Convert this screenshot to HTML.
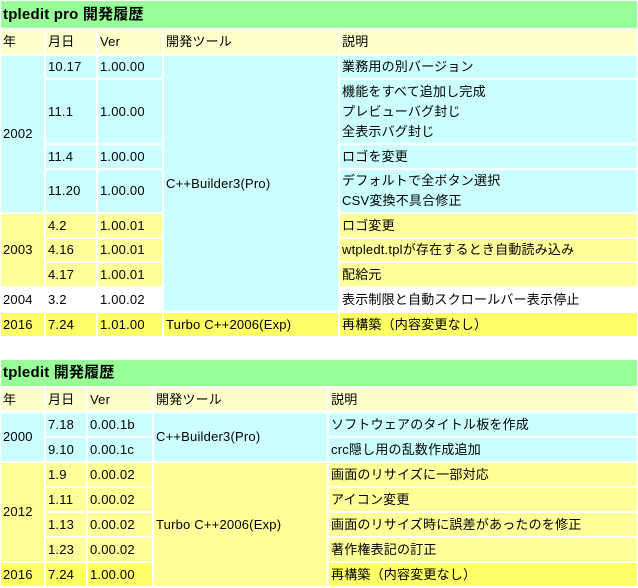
<!DOCTYPE html>
<html><head><meta charset="utf-8"><style>
body{margin:0;background:#fff;font-family:"Liberation Sans","Noto Sans CJK JP",sans-serif;font-size:13px;color:#000;}
table{border-collapse:separate;border-spacing:2px;width:640px;margin:-1px -1px 0 -1px;table-layout:fixed;position:absolute;left:0}
td{padding:0 2px;vertical-align:middle;line-height:20px;white-space:nowrap;overflow:hidden;letter-spacing:0.2px}
.t{background:#99ff99;font-weight:bold;font-size:15px;}
.h td{background:#ffffcc}
.c{background:#ccffff}
.y{background:#ffff99}
.z{background:#ffff66}
.w{background:#fff}
</style></head><body>
<table style="top:0">
<colgroup><col style="width:43px"><col style="width:50px"><col style="width:64px"><col style="width:174px"><col></colgroup>
<tr style="height:27px"><td class="t" colspan="5">tpledit pro 開発履歴</td></tr>
<tr class="h" style="height:24px"><td>年</td><td>月日</td><td>Ver</td><td>開発ツール</td><td>説明</td></tr>
<tr style="height:22px"><td class="c" rowspan="4">2002</td><td class="c">10.17</td><td class="c">1.00.00</td><td class="c" rowspan="8">C++Builder3(Pro)</td><td class="c">業務用の別バージョン</td></tr>
<tr style="height:63px"><td class="c">11.1</td><td class="c">1.00.00</td><td class="c">機能をすべて追加し完成<br>プレビューバグ封じ<br>全表示バグ封じ</td></tr>
<tr style="height:23px"><td class="c">11.4</td><td class="c">1.00.00</td><td class="c">ロゴを変更</td></tr>
<tr style="height:42px"><td class="c">11.20</td><td class="c">1.00.00</td><td class="c">デフォルトで全ボタン選択<br>CSV変換不具合修正</td></tr>
<tr style="height:23px"><td class="y" rowspan="3">2003</td><td class="y">4.2</td><td class="y">1.00.01</td><td class="y">ロゴ変更</td></tr>
<tr style="height:22px"><td class="y">4.16</td><td class="y">1.00.01</td><td class="y">wtpledt.tplが存在するとき自動読み込み</td></tr>
<tr style="height:23px"><td class="y">4.17</td><td class="y">1.00.01</td><td class="y">配給元</td></tr>
<tr style="height:23px"><td class="w">2004</td><td class="w">3.2</td><td class="w">1.00.02</td><td class="w">表示制限と自動スクロールバー表示停止</td></tr>
<tr style="height:23px"><td class="z">2016</td><td class="z">7.24</td><td class="z">1.01.00</td><td class="z">Turbo C++2006(Exp)</td><td class="z">再構築（内容変更なし）</td></tr>
</table>
<table style="top:359px">
<colgroup><col style="width:43px"><col style="width:40px"><col style="width:64px"><col style="width:173px"><col></colgroup>
<tr style="height:26px"><td class="t" colspan="5">tpledit 開発履歴</td></tr>
<tr class="h" style="height:23px"><td>年</td><td>月日</td><td>Ver</td><td>開発ツール</td><td>説明</td></tr>
<tr style="height:23px"><td class="c" rowspan="2">2000</td><td class="c">7.18</td><td class="c">0.00.1b</td><td class="c" rowspan="2">C++Builder3(Pro)</td><td class="c">ソフトウェアのタイトル板を作成</td></tr>
<tr style="height:23px"><td class="c">9.10</td><td class="c">0.00.1c</td><td class="c">crc隠し用の乱数作成追加</td></tr>
<tr style="height:23px"><td class="y" rowspan="4">2012</td><td class="y">1.9</td><td class="y">0.00.02</td><td class="y" rowspan="5">Turbo C++2006(Exp)</td><td class="y">画面のリサイズに一部対応</td></tr>
<tr style="height:23px"><td class="y">1.11</td><td class="y">0.00.02</td><td class="y">アイコン変更</td></tr>
<tr style="height:23px"><td class="y">1.13</td><td class="y">0.00.02</td><td class="y">画面のリサイズ時に誤差があったのを修正</td></tr>
<tr style="height:23px"><td class="y">1.23</td><td class="y">0.00.02</td><td class="y">著作権表記の訂正</td></tr>
<tr style="height:23px"><td class="z">2016</td><td class="z">7.24</td><td class="z">1.00.00</td><td class="z">再構築（内容変更なし）</td></tr>
</table>
</body></html>
